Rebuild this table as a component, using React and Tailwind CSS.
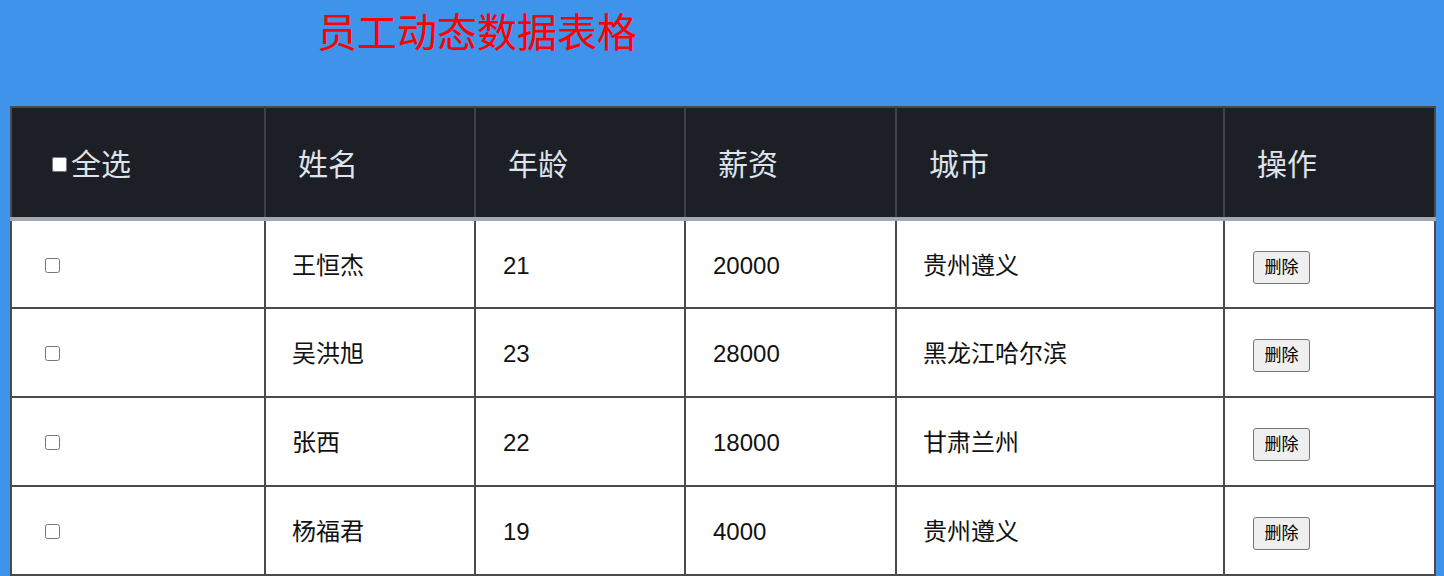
import React from "react";

const rows = [
  { name: "王恒杰", age: 21, salary: 20000, city: "贵州遵义" },
  { name: "吴洪旭", age: 23, salary: 28000, city: "黑龙江哈尔滨" },
  { name: "张西", age: 22, salary: 18000, city: "甘肃兰州" },
  { name: "杨福君", age: 19, salary: 4000, city: "贵州遵义" },
];

const font = "font-['Liberation_Sans','Noto_Sans_CJK_SC',sans-serif]";

export default function App() {
  return (
    <div className={`min-h-screen bg-[#3f93eb] px-[10px] ${font}`}>
      {/* title */}
      <h1 className="pt-[13px] pl-[307px] text-[40px] leading-[40px] text-[#ff0000] h-[106px]">
        员工动态数据表格
      </h1>

      <table className="w-[1424px] table-fixed border-collapse border-2 border-[#4a4a4a]">
        <colgroup>
          <col className="w-[254px]" />
          <col className="w-[210px]" />
          <col className="w-[210px]" />
          <col className="w-[211px]" />
          <col className="w-[328px]" />
          <col className="w-[211px]" />
        </colgroup>
        <thead>
          <tr className="h-[112px] bg-[#1c1f26] text-[#dfe3ea] text-[30px] border-b-4 border-[#a3a8b0]">
            <th className="pl-[40px] pt-[4px] text-left font-normal border-r-2 border-[#3d4047]">
              <div className="flex items-center">
                <input type="checkbox" className="w-[15px] h-[15px] m-0 mr-[4px]" />
                <span>全选</span>
              </div>
            </th>
            <th className="pl-[32px] pt-[4px] text-left font-normal border-r-2 border-[#3d4047]">姓名</th>
            <th className="pl-[32px] pt-[4px] text-left font-normal border-r-2 border-[#3d4047]">年龄</th>
            <th className="pl-[32px] pt-[4px] text-left font-normal border-r-2 border-[#3d4047]">薪资</th>
            <th className="pl-[32px] pt-[4px] text-left font-normal border-r-2 border-[#3d4047]">城市</th>
            <th className="pl-[32px] pt-[4px] text-left font-normal">操作</th>
          </tr>
        </thead>
        <tbody className="bg-white text-[24px] text-[#111]">
          {rows.map((r) => (
            <tr key={r.name} className="h-[89px]">
              <td className="pl-[33px] pt-[2px] border-2 border-[#4a4a4a]">
                <input type="checkbox" className="w-[15px] h-[15px] m-0 block" />
              </td>
              <td className="pl-[26px] pt-[3px] border-2 border-[#4a4a4a]">{r.name}</td>
              <td className="pl-[27px] pt-[3px] border-2 border-[#4a4a4a]">{r.age}</td>
              <td className="pl-[27px] pt-[3px] border-2 border-[#4a4a4a]">{r.salary}</td>
              <td className="pl-[26px] pt-[3px] border-2 border-[#4a4a4a]">{r.city}</td>
              <td className="pl-[28px] pt-[2px] border-2 border-[#4a4a4a]">
                <button className="w-[57px] h-[33px] text-[17px] leading-none bg-[#efefef] border border-[#767676] rounded-[3px] text-black">
                  删除
                </button>
              </td>
            </tr>
          ))}
        </tbody>
      </table>
    </div>
  );
}
